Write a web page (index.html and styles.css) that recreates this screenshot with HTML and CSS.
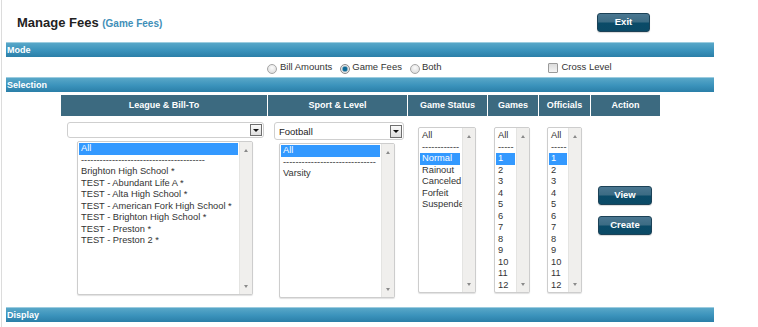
FILE: index.html
```html
<!DOCTYPE html>
<html>
<head>
<meta charset="utf-8">
<link rel="stylesheet" href="styles.css">
</head>
<body>
<div class="page">
  <div class="top">
    <h1 class="title">Manage Fees <span class="sub">(Game Fees)</span></h1>
    <button class="btn exit">Exit</button>
  </div>

  <div class="bar">Mode</div>
  <div class="mode">
    <span class="radio"></span><span class="lbl">Bill Amounts</span>
    <span class="radio on"></span><span class="lbl">Game Fees</span>
    <span class="radio"></span><span class="lbl">Both</span>
    <span class="check"></span><span class="lbl">Cross Level</span>
  </div>

  <div class="bar">Selection</div>
  <div class="grid head">
    <div>League &amp; Bill-To</div>
    <div>Sport &amp; Level</div>
    <div>Game Status</div>
    <div>Games</div>
    <div>Officials</div>
    <div>Action</div>
  </div>
  <div class="grid body">
    <div class="c-league">
      <div class="dd dd1"><span></span><span class="ddb"><i></i></span></div>
      <div class="lb lb1">
        <div class="opts">
          <div class="sel">All</div>
          <div>----------------------------------------</div>
          <div>Brighton High School *</div>
          <div>TEST - Abundant Life A *</div>
          <div>TEST - Alta High School *</div>
          <div>TEST - American Fork High School *</div>
          <div>TEST - Brighton High School *</div>
          <div>TEST - Preston *</div>
          <div>TEST - Preston 2 *</div>
        </div>
        <div class="sb"><i class="up"></i><i class="dn"></i></div>
      </div>
    </div>
    <div class="c-sport">
      <div class="dd dd2"><span>Football</span><span class="ddb"><i></i></span></div>
      <div class="lb lb2">
        <div class="opts">
          <div class="sel">All</div>
          <div>------------------------------</div>
          <div>Varsity</div>
        </div>
        <div class="sb"><i class="up"></i><i class="dn"></i></div>
      </div>
    </div>
    <div class="c-status">
      <div class="lb lb3">
        <div class="opts">
          <div>All</div>
          <div>------------</div>
          <div class="sel">Normal</div>
          <div>Rainout</div>
          <div>Canceled</div>
          <div>Forfeit</div>
          <div>Suspended</div>
        </div>
        <div class="sb"><i class="up"></i><i class="dn"></i></div>
      </div>
    </div>
    <div class="c-games">
      <div class="lb lb4">
        <div class="opts">
          <div>All</div><div>-----</div><div class="sel">1</div>
          <div>2</div><div>3</div><div>4</div><div>5</div><div>6</div>
          <div>7</div><div>8</div><div>9</div><div>10</div><div>11</div><div>12</div>
        </div>
        <div class="sb"><i class="up"></i><i class="dn"></i></div>
      </div>
    </div>
    <div class="c-off">
      <div class="lb lb5">
        <div class="opts">
          <div>All</div><div>-----</div><div class="sel">1</div>
          <div>2</div><div>3</div><div>4</div><div>5</div><div>6</div>
          <div>7</div><div>8</div><div>9</div><div>10</div><div>11</div><div>12</div>
        </div>
        <div class="sb"><i class="up"></i><i class="dn"></i></div>
      </div>
    </div>
    <div class="c-action">
      <button class="btn view">View</button>
      <button class="btn create">Create</button>
    </div>
  </div>
  <div class="bar">Display</div>
</div>
</body>
</html>
```

FILE: styles.css
```css
html, body { margin: 0; padding: 0; background: #fff; }
body { font-family: "Liberation Sans", Arial, sans-serif; color: #333; }
.page {
  margin-left: 1px;
  border-left: 1px solid #dcdcdc;
  min-height: 327px;
  box-sizing: border-box;
}
.top { display: flex; align-items: flex-start; height: 42px; }
.title {
  margin: 15px 0 0 15px;
  font-size: 13px; line-height: 16px; font-weight: bold; color: #222;
}
.title .sub { font-size: 10px; color: #3f8fb8; }

.btn {
  display: block;
  font-family: "Liberation Sans", Arial, sans-serif;
  font-size: 9.5px; font-weight: bold; color: #fff;
  width: 54px; height: 19px; padding: 0 0 2px;
  border: 1px solid #1c4257; border-radius: 3px;
  background: linear-gradient(#4a7791 0%, #3b6b83 48%, #0a4b68 52%, #0b4a66 100%);
  box-shadow: 0 1px 1px rgba(0,0,0,0.15);
  line-height: 15px;
}
.exit { margin: 13px 108px 0 auto; width: 53px; }

.bar {
  margin-left: 4px; width: 708px; height: 15px; box-sizing: border-box;
  border-top: 1px solid #9cccdf;
  background: linear-gradient(#58a7c8 0%, #3a92bb 55%, #2b7fa8 100%);
  color: #fff; font-size: 9px; font-weight: bold; line-height: 14px;
  padding-left: 1px;
}

.mode {
  display: flex; align-items: center; height: 20px; box-sizing: border-box;
  padding: 0 0 2px 265px; font-size: 9.5px; color: #333;
}
.radio {
  width: 10px; height: 10px; box-sizing: border-box; border-radius: 50%;
  border: 1px solid #a5a5a5;
  background: radial-gradient(circle at 50% 35%, #fbfbfb 0%, #d6d6d6 100%);
  margin-top: 5px;
}
.radio.on {
  background: radial-gradient(circle, #0c6a98 0 2px, #7fa9bd 2.5px, #e8e8e8 3.5px, #cfcfcf 100%);
  border-color: #8a8a8a;
}
.lbl { margin-left: 3px; margin-right: 8px; }
.radio.on + .lbl, .radio + .lbl + .radio + .lbl + .radio + .lbl { margin-left: 2px; }
.check {
  width: 10px; height: 10px; box-sizing: border-box; margin-left: 99px;
  border: 1px solid #9a9a9a; border-radius: 1px;
  background: linear-gradient(#dcdcdc, #f4f4f4);
  margin-top: 4px;
}

.grid {
  display: grid;
  grid-template-columns: 206px 139px 79px 50px 51px 69px;
  column-gap: 1px;
  margin-left: 59px;
  width: 599px;
}
.head { margin-top: 3px; }
.head > div {
  background: #3c6a80; color: #fff; height: 21px; line-height: 21px;
  text-align: center; font-size: 9px; font-weight: bold;
}
.body { height: 191px; }

.dd {
  display: flex; align-items: center; justify-content: space-between;
  box-sizing: border-box; background: #fff;
  border: 1px solid #cfcfcf; border-radius: 3px;
  padding: 0 1px 0 4px; font-size: 9.5px; color: #222;
}
.dd1 { width: 197px; height: 16px; margin: 6px 0 0 6px; }
.dd2 { width: 130px; height: 18px; margin: 6px 0 0 6px; }
.ddb {
  width: 12px; height: 12px; box-sizing: border-box;
  border: 1px solid #6e6e6e; background: linear-gradient(#fafafa, #dedede);
  display: flex; align-items: center; justify-content: center;
}
.dd2 .ddb { height: 13px; }
.ddb i {
  width: 0; height: 0; border-left: 3px solid transparent;
  border-right: 3px solid transparent; border-top: 3px solid #111;
}

.lb {
  display: flex; box-sizing: border-box; background: #fff;
  border: 1px solid #cdcdcd; border-radius: 2px;
  box-shadow: 0 1px 1px rgba(0,0,0,0.12);
  font-size: 9.3px; line-height: 11.5px; color: #333;
}
.opts { flex: 1; overflow: hidden; padding: 1px 1px; white-space: nowrap; }
.opts > div { padding-left: 2px; height: 11.5px; }
.opts .sel { background: #3399ff; color: #fff; }
.sb {
  width: 13px; background: #f0efed; border-left: 1px solid #e4e4e2;
  display: flex; flex-direction: column; justify-content: space-between;
  align-items: center; padding: 7px 0 6px; box-sizing: border-box;
}
.sb i { width: 0; height: 0; border-left: 2.5px solid transparent; border-right: 2.5px solid transparent; }
.sb .up { border-bottom: 3px solid #8a8a8a; }
.sb .dn { border-top: 3px solid #8a8a8a; }

.lb1 { width: 176px; height: 154px; margin: 3px 0 0 16px; }
.lb2 { width: 116px; height: 155px; margin: 3px 0 0 11px; }
.lb3 { width: 58px; height: 166px; margin: 11px 0 0 10px; }
.lb4 { width: 36px; height: 166px; margin: 11px 0 0 6px; }
.lb5 { width: 35px; height: 166px; margin: 11px 0 0 8px; }
.lb3 .opts .sel { margin-right: 1px; }
.lb3 .opts, .lb4 .opts, .lb5 .opts { padding-top: 2px; }

.view { margin: 70px 0 0 7px; }
.create { margin: 11px 0 0 7px; }
```
